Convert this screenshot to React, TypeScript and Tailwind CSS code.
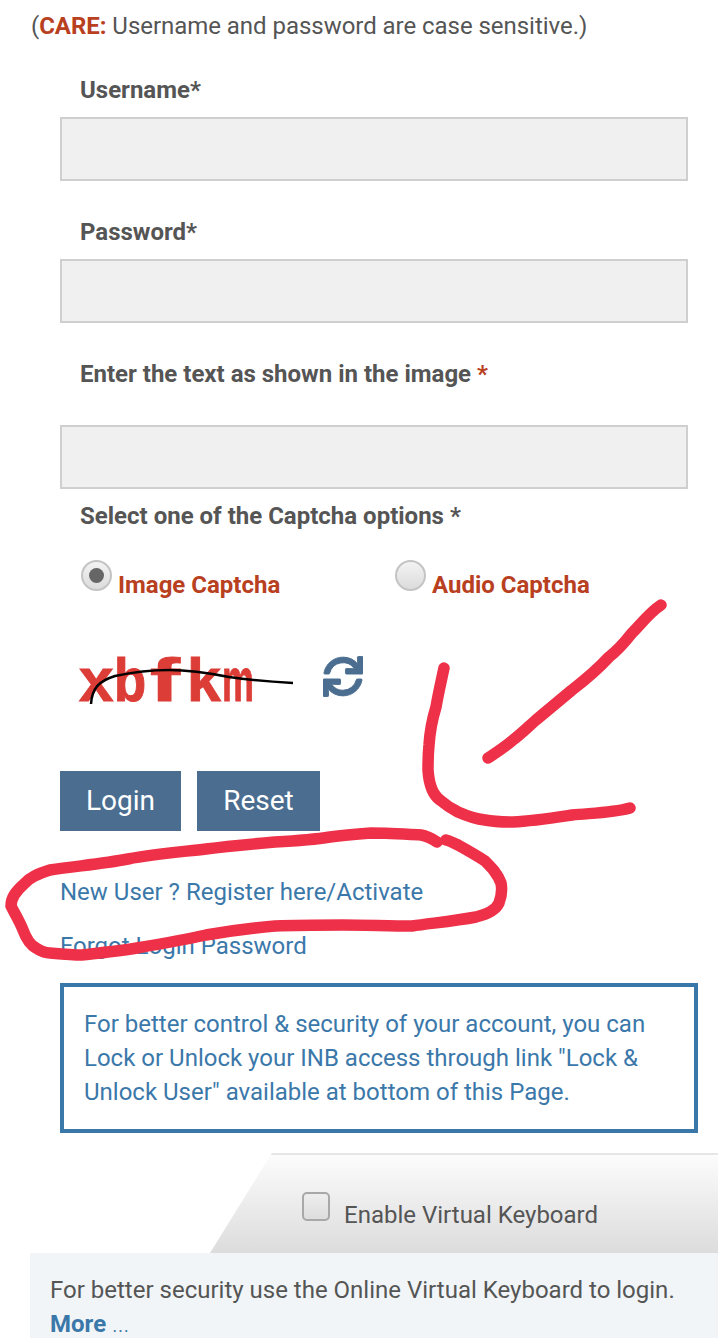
import React from "react";
import { FaSync } from "react-icons/fa";

const Field = () => (
  <div className="ml-[60px] w-[628px] h-[64px] bg-[#f0f0f0] border-2 border-[#cfcfcf]" />
);

const Radio = ({ checked }: { checked?: boolean }) => (
  <div className="w-[31px] h-[31px] shrink-0 rounded-full border-2 border-[#c4c4c4] bg-gradient-to-b from-[#f3f3f3] to-[#dcdcdc] flex items-center justify-center">
    {checked && <div className="w-[15px] h-[15px] rounded-full bg-[#666666]" />}
  </div>
);

export default function App() {
  return (
    <div className="relative w-[718px] h-[1338px] overflow-hidden bg-white text-[#555555] text-[24px] leading-[34px] font-['Roboto',sans-serif]">
      <p className="pl-[31px] pt-[9px] h-[43px] tracking-[-0.04px]">
        (<b className="text-[#b8401f]">CARE:</b> Username and password are case sensitive.)
      </p>
      <p className="pl-[80px] mt-[30px] font-bold h-[34px]">Username*</p>
      <div className="mt-[10px]"><Field /></div>
      <p className="pl-[80px] mt-[34px] font-bold h-[34px]">Password*</p>
      <div className="mt-[10px]"><Field /></div>
      <p className="pl-[80px] mt-[34px] font-bold h-[34px]">
        Enter the text as shown in the image <span className="text-[#b8401f]">*</span>
      </p>
      <div className="mt-[34px]"><Field /></div>
      <p className="pl-[80px] mt-[10px] font-bold h-[34px]">Select one of the Captcha options *</p>
      <div className="flex mt-[27px] h-[44px] pl-[81px]">
        <div className="flex w-[314px]">
          <Radio checked />
          <span className="ml-[6px] mt-[8px] font-bold text-[#b8401f]">Image Captcha</span>
        </div>
        <div className="flex">
          <Radio />
          <span className="ml-[6px] mt-[8px] font-bold text-[#b8401f]">Audio Captcha</span>
        </div>
      </div>
      <div className="flex items-start mt-[50px] h-[72px] pl-[79px]">
        <div className="relative w-[215px] h-[60px]">
          <div className="absolute left-0 top-[-1px] flex text-[#dc3d37] text-[62px] leading-[54px] font-bold font-['Liberation_Sans',sans-serif] blur-[0.4px] [-webkit-text-stroke:1px_#dc3d37]">
            <span className="w-[35px] origin-left scale-x-[1]">x</span>
            <span className="w-[36px] origin-left scale-x-[0.85]">b</span>
            <span className="w-[37px] origin-left scale-x-[1.45]">f</span>
            <span className="w-[35px] origin-left scale-x-[0.98]">k</span>
            <span className="w-[31px] origin-left scale-x-[0.58]">m</span>
          </div>
          <svg className="absolute left-0 top-0" width="215" height="60" viewBox="0 0 215 60" fill="none">
            <path d="M12 50C13 34 20 27 36 22C50 19 70 16 90 16C110 16 130 19 150 23C170 26 195 28 214 29" stroke="#000" strokeWidth="2.5" />
          </svg>
        </div>
        <FaSync className="ml-[29px] mt-[2px] text-[#4a6d90] w-[40px] h-[41px] stroke-[#4a6d90] stroke-[12]" />
      </div>
      <div className="flex gap-[16px] pl-[60px] mt-[45px]">
        <button className="w-[121px] h-[60px] bg-[#4a6d90] text-white text-[28px]">Login</button>
        <button className="w-[123px] h-[60px] bg-[#4a6d90] text-white text-[28px]">Reset</button>
      </div>
      <p className="pl-[60px] mt-[44px] h-[34px] text-[#3b78aa]">New User ? Register here/Activate</p>
      <p className="pl-[60px] mt-[20px] h-[34px] text-[#3b78aa]">Forgot Login Password</p>
      <div className="ml-[60px] mt-[20px] w-[638px] h-[150px] border-4 border-[#3b78aa] px-[20px] pt-[20px] text-[#3b78aa]">
        For better control &amp; security of your account, you can Lock or Unlock your INB access through link "Lock &amp; Unlock User" available at bottom of this Page.
      </div>
      <div className="mt-[20px] ml-[210px] h-[100px] flex bg-gradient-to-b from-[#fcfcfc] to-[#dcdcdc] border-t-2 border-[#e6e6e6] [clip-path:polygon(62px_0,100%_0,100%_100%,0_100%)]">
        <div className="ml-[92px] mt-[37px] w-[28px] h-[29px] rounded-[5px] border-2 border-[#a8a8a8] bg-gradient-to-b from-[#eeeeee] to-[#dddddd]" />
        <span className="ml-[14px] mt-[43px] h-[34px]">Enable Virtual Keyboard</span>
      </div>
      <div className="ml-[30px] h-[85px] bg-[#f1f5f7] pl-[20px] pt-[20px]">
        For better security use the Online Virtual Keyboard to login.
        <br />
        <b className="text-[#3b78aa]">More</b> <span className="text-[#3b78aa] font-light">...</span>
      </div>
      <svg className="absolute left-0 top-0 pointer-events-none" width="718" height="1338" viewBox="0 0 718 1338" fill="none" stroke="#ee3048" strokeWidth="11.5" strokeLinecap="round" strokeLinejoin="round">
        <path d="M661 605C650 612 640 625 632 633C625 642 618 650 609 657C597 670 585 680 572 690C560 700 548 710 536 720C528 727 521 734 513 740C505 747 497 752 488 758" />
        <path d="M444 668C441 682 438 695 436 707C432 720 430 730 429 745C428 755 428 762 428 770C429 785 433 795 440 800C447 806 452 809 458 812C467 816 476 819 485 820C495 822 504 822 513 822C533 821 552 818 572 815C592 813 612 813 630 808" />
        <path d="M437 842C431 838 427 836 421 835C404 834 388 833 371 833C357 834 344 835 330 837C312 840 294 841 275 842C252 844 229 846 206 849C180 852 154 854 128 859C102 864 76 866 50 870C38 874 30 877 24 884C15 892 11 898 11 906C15 914 20 922 23 930C26 938 30 945 36 948C42 952 46 953 50 953C61 954 71 955 82 955C100 953 119 951 137 948C160 944 183 940 206 935C229 931 252 928 275 926C298 925 320 925 343 925C366 925 389 926 412 926C433 923 455 921 476 917C488 914 496 910 499 903C502 895 502 888 501 883C497 873 492 868 485 861C476 855 467 850 458 845C454 843 450 841 446 840" />
      </svg>
    </div>
  );
}
